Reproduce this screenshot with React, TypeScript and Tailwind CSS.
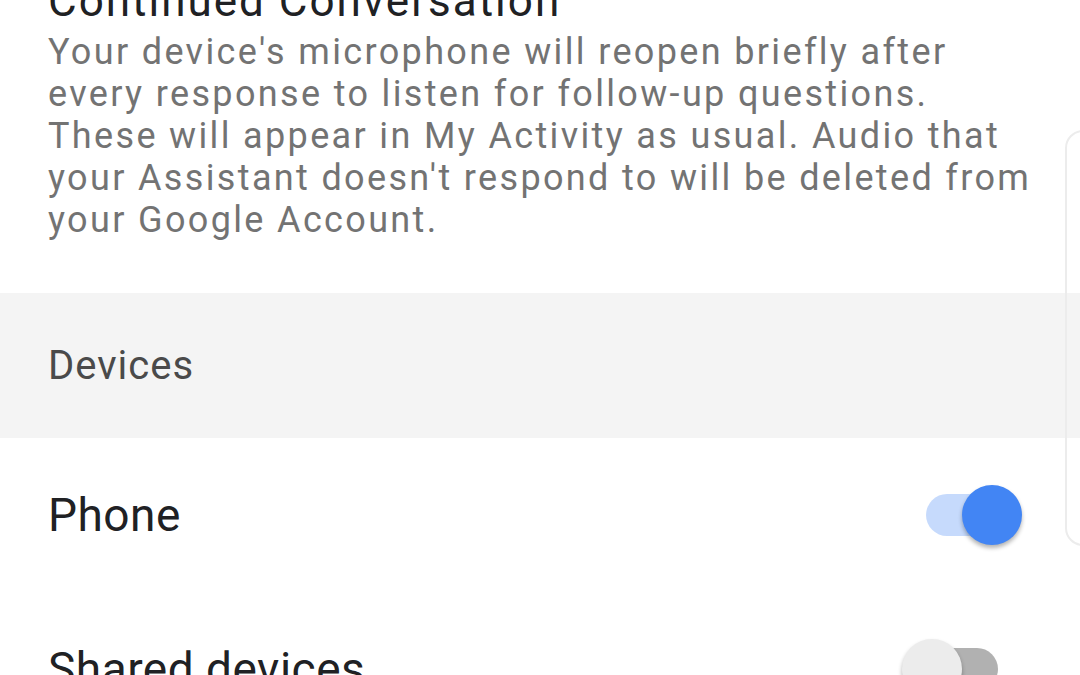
function Toggle({ on }: { on: boolean }) {
  return (
    <div
      className={`relative h-[42px] w-[72px] rounded-full ${
        on ? "bg-[#c6dafc]" : "bg-[#b1b1b1]"
      }`}
    >
      <div
        className={`absolute top-[-9px] size-[60px] rounded-full shadow-[0_3px_4px_rgba(0,0,0,0.3)] ${
          on ? "left-[36px] bg-[#4285f4]" : "left-[-24px] bg-[#ececec]"
        }`}
      />
    </div>
  );
}

const rows = [
  { name: "Phone", on: true },
  { name: "Shared devices", on: false },
];

const lines = [
  "Your device's microphone will reopen briefly after",
  "every response to listen for follow-up questions.",
  "These will appear in My Activity as usual. Audio that",
  "your Assistant doesn't respond to will be deleted from",
  "your Google Account.",
];

export default function App() {
  return (
    <main className="relative h-[675px] w-[1080px] overflow-hidden bg-white font-['Roboto',sans-serif]">
      <section className="-mt-[21px] px-[48px]">
        <h1 className="text-[44px] leading-[44px] tracking-[2px] text-[#202124]">
          Continued Conversation
        </h1>
        <p className="mt-[8px] whitespace-nowrap text-[36px] leading-[42px] tracking-[2.35px] text-[#737373]">
          {lines.map((l) => (
            <span key={l} className="block">
              {l}
            </span>
          ))}
        </p>
      </section>

      <div className="mt-[52px] flex h-[145px] items-center bg-[#f4f4f4] px-[48px]">
        <h2 className="text-[40px] tracking-[1px] text-[#4a4a4a]">Devices</h2>
      </div>

      {rows.map(({ name, on }) => (
        <div
          key={name}
          className="flex h-[154px] items-center justify-between pl-[48px] pr-[82px]"
        >
          <span className="text-[46px] tracking-[0.5px] text-[#202124]">{name}</span>
          <Toggle on={on} />
        </div>
      ))}

      <div className="absolute left-[1065px] top-[130px] h-[416px] w-[40px] rounded-l-[18px] border-2 border-[#ececec]" />
    </main>
  );
}
